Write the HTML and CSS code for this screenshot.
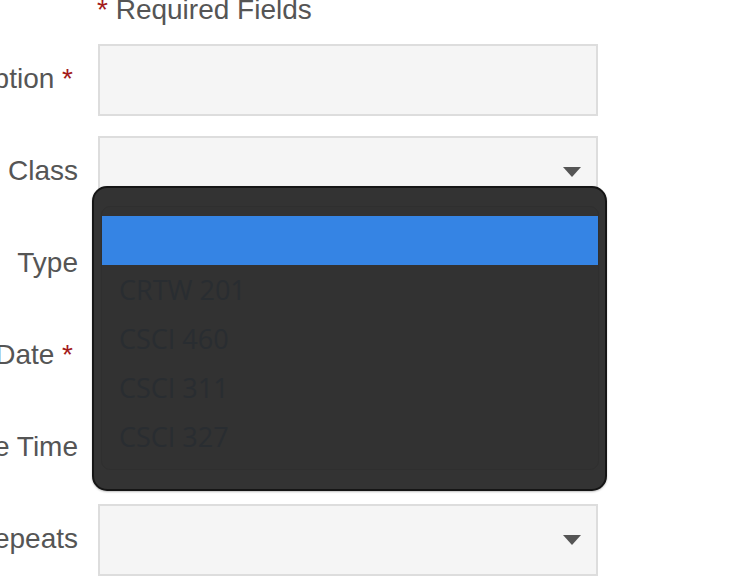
FILE: index.html
```html
<!DOCTYPE html>
<html>
<head>
<meta charset="utf-8">
<link rel="stylesheet" href="styles.css">
</head>
<body>
<div class="page">
  <div class="required-note"><span class="star">*</span> Required Fields</div>
  <form class="form">
    <div class="row">
      <div class="label"><span>Description <span class="star label-star">*</span></span></div>
      <div class="field"></div>
    </div>
    <div class="row">
      <div class="label"><span>Class</span></div>
      <div class="field select"><span class="arrow"></span></div>
    </div>
    <div class="row">
      <div class="label"><span>Type</span></div>
      <div class="field select"><span class="arrow"></span></div>
    </div>
    <div class="row">
      <div class="label"><span>Due Date <span class="star label-star">*</span></span></div>
      <div class="field"></div>
    </div>
    <div class="row">
      <div class="label"><span>Due Time</span></div>
      <div class="field"></div>
    </div>
    <div class="row">
      <div class="label"><span>Repeats</span></div>
      <div class="field select"><span class="arrow"></span></div>
    </div>
  </form>
  <div class="popup">
    <ul class="options">
      <li class="option selected"></li>
      <li class="option">CRTW 201</li>
      <li class="option">CSCI 460</li>
      <li class="option">CSCI 311</li>
      <li class="option">CSCI 327</li>
    </ul>
  </div>
</div>
</body>
</html>
```
FILE: styles.css
```css
html, body {
  margin: 0;
  padding: 0;
  background: #ffffff;
}
body {
  font-family: "Liberation Sans", Arial, sans-serif;
  color: #555555;
  overflow: hidden;
}
.page {
  position: relative;
  width: 753px;
  height: 582px;
  overflow: hidden;
}
.required-note {
  margin: -6px 0 18px 97px;
  font-size: 28px;
  line-height: 32px;
  height: 32px;
  white-space: nowrap;
}
.star {
  color: #a31a1a;
}
.label-star {
  margin-right: 5px;
}
.form {
  display: flex;
  flex-direction: column;
  gap: 20px;
  margin: 0;
}
.row {
  display: grid;
  grid-template-columns: 78px 500px;
  column-gap: 20px;
  height: 72px;
}
.label {
  display: flex;
  justify-content: flex-end;
  align-items: center;
  font-size: 28px;
  line-height: 32px;
  white-space: nowrap;
  padding-bottom: 2px;
}
.label > span {
  flex: none;
}
.field {
  box-sizing: border-box;
  height: 72px;
  border: 2px solid #dddddd;
  background: #f5f5f5;
  position: relative;
  display: flex;
  align-items: center;
  justify-content: flex-end;
  padding-right: 15px;
}
.arrow {
  width: 0;
  height: 0;
  border-left: 9px solid transparent;
  border-right: 9px solid transparent;
  border-top: 10px solid #555555;
}
.popup {
  position: absolute;
  left: 92px;
  top: 186px;
  width: 515px;
  height: 305px;
  box-sizing: border-box;
  background: #333333;
  border: 2px solid #151515;
  border-radius: 15px;
  padding: 18px 6px 19px 7px;
  box-shadow: 0 1px 2px rgba(0,0,0,0.25);
}
.options {
  list-style: none;
  margin: 0;
  box-sizing: border-box;
  height: 100%;
  padding: 9px 0 8px 0;
  border: 1px solid #2f2f2f;
  border-radius: 9px;
  background: #323232;
}
.option {
  height: 49px;
  line-height: 49px;
  padding-left: 17px;
  font-family: "Open Sans", "Noto Sans", sans-serif;
  font-size: 27px;
  color: #292d31;
  white-space: nowrap;
}
.option.selected {
  background: #3584e4;
}
```
